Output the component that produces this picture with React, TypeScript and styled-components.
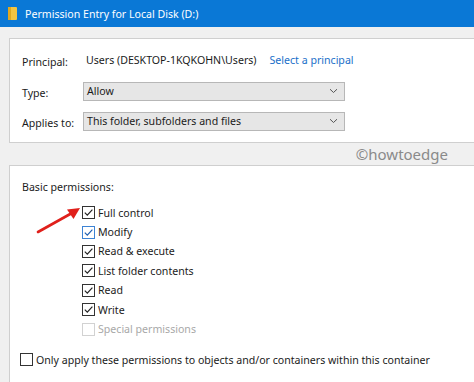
import React from 'react'
import styled, { createGlobalStyle } from 'styled-components'

const GlobalStyle = createGlobalStyle`
  html, body {
    margin: 0;
    padding: 0;
    background: #f0f0f0;
    overflow: hidden;
  }
  body {
    font-family: 'Noto Sans', 'Open Sans', sans-serif;
    font-size: 10.6px;
    color: #1b1b1b;
  }
`

const PERMISSIONS = [
  { label: 'Full control', checked: true },
  { label: 'Modify', checked: true, focused: true },
  { label: 'Read & execute', checked: true },
  { label: 'List folder contents', checked: true },
  { label: 'Read', checked: true },
  { label: 'Write', checked: true },
  { label: 'Special permissions', checked: false, disabled: true },
]

export default function App() {
  return (
    <Window>
      <GlobalStyle />
      <TitleBar>
        <FolderIcon />
        <TitleText>Permission Entry for Local Disk (D:)</TitleText>
      </TitleBar>
      <Body>
        <Panel>
          <FieldRow>
            <Label>Principal:</Label>
            <Value>Users (DESKTOP-1KQKOHN\Users)</Value>
            <Link>Select a principal</Link>
          </FieldRow>
          <FieldRow>
            <Label>Type:</Label>
            <Select>
              <span>Allow</span>
              <Chevron />
            </Select>
          </FieldRow>
          <FieldRow>
            <Label>Applies to:</Label>
            <Select>
              <span>This folder, subfolders and files</span>
              <Chevron />
            </Select>
          </FieldRow>
        </Panel>
        <Watermark>©howtoedge</Watermark>
        <Panel $open>
          <SectionTitle>Basic permissions:</SectionTitle>
          <CheckList>
            <Arrow />
            {PERMISSIONS.map((p) => (
              <CheckRow key={p.label} $disabled={p.disabled}>
                <CheckBox checked={p.checked} focused={p.focused} disabled={p.disabled} />
                {p.label}
              </CheckRow>
            ))}
          </CheckList>
          <BottomRow>
            <CheckBox checked={false} />
            Only apply these permissions to objects and/or containers within this container
          </BottomRow>
        </Panel>
      </Body>
    </Window>
  )
}

function FolderIcon() {
  return (
    <svg width="9" height="13" viewBox="0 0 9 13">
      <rect x="0" y="0" width="9" height="13" rx="1" fill="#f4c542" />
      <rect x="0" y="0" width="3" height="13" fill="#e0a820" />
    </svg>
  )
}

function Chevron() {
  return (
    <svg width="9" height="6" viewBox="0 0 9 6">
      <path d="M1 1.2 L4.5 4.5 L8 1.2" fill="none" stroke="#555" strokeWidth="1" />
    </svg>
  )
}

function CheckBox({ checked, focused, disabled }: { checked: boolean; focused?: boolean; disabled?: boolean }) {
  return (
    <Box $focused={focused} $disabled={disabled}>
      {checked && (
        <svg width="11" height="11" viewBox="0 0 11 11">
          <path d="M1.8 5.6 L4.3 8.1 L9.4 2.6" fill="none" stroke={focused ? '#1f5fb0' : '#222'} strokeWidth="1.2" />
        </svg>
      )}
    </Box>
  )
}

function Arrow() {
  return (
    <ArrowSvg width="50" height="32" viewBox="0 0 50 32">
      <path d="M2 29 L36 10" stroke="#e0201b" strokeWidth="2.6" strokeLinecap="round" />
      <path d="M44 5 L31 6.5 L37.5 16 Z" fill="#e0201b" />
    </ArrowSvg>
  )
}

const Window = styled.div`
  width: 474px;
  height: 382px;
  display: flex;
  flex-direction: column;
  overflow: hidden;
`

const TitleBar = styled.div`
  height: 27px;
  background: #0a78d6;
  display: flex;
  align-items: center;
  gap: 8px;
  padding-left: 8px;
  flex-shrink: 0;
`

const TitleText = styled.span`
  color: #ffffff;
  font-size: 10.6px;
`

const Body = styled.div`
  flex: 1;
  display: flex;
  flex-direction: column;
  padding: 11px 0 0 9px;
`

const Panel = styled.div<{ $open?: boolean }>`
  box-sizing: border-box;
  background: #ffffff;
  border: 1px solid #cfcfcf;
  border-right: none;
  ${(p) => (p.$open ? 'border-bottom: none; flex: 1;' : 'height: 105px; flex-shrink: 0;')}
  padding: ${(p) => (p.$open ? '14px 0 0 12px' : '11px 0 0 12px')};
  display: flex;
  flex-direction: column;
`

const FieldRow = styled.div`
  display: flex;
  align-items: center;
  height: 20px;
  margin-bottom: 10px;
  &:first-child {
    margin-bottom: 11px;
  }
`

const Label = styled.span`
  width: 61px;
  flex-shrink: 0;
  padding-top: 3px;
`

const Value = styled.span`
  margin-left: 3px;
  margin-right: 13px;
`

const Link = styled.span`
  color: #1a6fc9;
`

const Select = styled.div`
  width: 262px;
  height: 19px;
  box-sizing: border-box;
  border: 1px solid #b7b7b7;
  background: #e6e6e6;
  display: flex;
  align-items: center;
  justify-content: space-between;
  padding: 0 6px 0 3px;
`

const Watermark = styled.div`
  height: 22px;
  flex-shrink: 0;
  display: flex;
  align-items: center;
  justify-content: flex-end;
  padding-right: 26px;
  font-size: 15px;
  color: #8a8a8a;
`

const SectionTitle = styled.div`
  height: 18px;
  margin-bottom: 5px;
`

const CheckList = styled.div`
  position: relative;
  display: flex;
  flex-direction: column;
  padding-left: 60px;
`

const CheckRow = styled.div<{ $disabled?: boolean }>`
  display: flex;
  align-items: center;
  gap: 3px;
  height: 19.4px;
  color: ${(p) => (p.$disabled ? '#a8a8a8' : '#1b1b1b')};
`

const Box = styled.span<{ $focused?: boolean; $disabled?: boolean }>`
  width: 13px;
  height: 13px;
  box-sizing: border-box;
  border: 1px solid ${(p) => (p.$disabled ? '#d2d2d2' : p.$focused ? '#3d83d4' : '#333')};
  background: #fff;
  display: inline-flex;
  align-items: center;
  justify-content: center;
  flex-shrink: 0;
`

const ArrowSvg = styled.svg`
  position: absolute;
  left: 14px;
  top: 0px;
`

const BottomRow = styled.div`
  display: flex;
  align-items: center;
  gap: 3px;
  margin-top: 14px;
  margin-left: -2px;
`
